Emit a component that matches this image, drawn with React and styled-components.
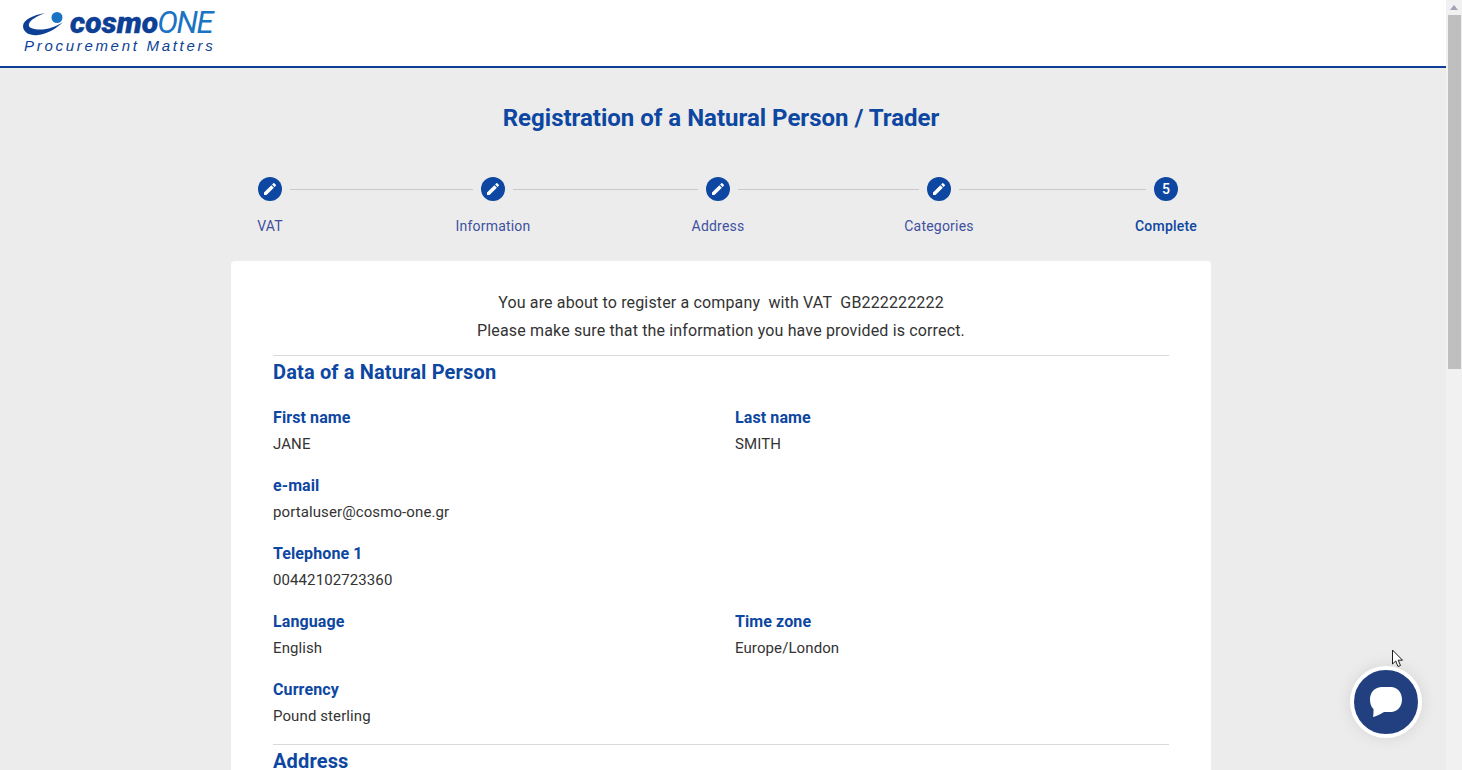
import React from 'react';
import styled, { createGlobalStyle } from 'styled-components';

const GlobalStyle = createGlobalStyle`
  html, body { margin: 0; padding: 0; height: 100%; overflow: hidden; }
  body { font-family: Roboto, "Liberation Sans", sans-serif; background: #ececec; }
`;

const Root = styled.div`
  display: flex;
  height: 770px;
  overflow: hidden;
`;

const Page = styled.div`
  flex: 1;
  min-width: 0;
  overflow: hidden;
  background: #ececec;
`;

const Scrollbar = styled.div`
  flex: 0 0 16px;
  background: #f1f1f1;
  display: flex;
  flex-direction: column;
`;

const ScrollArrow = styled.div`
  height: 15px;
  display: flex;
  align-items: center;
  justify-content: center;
`;

const ScrollThumb = styled.div`
  height: 354px;
  margin: 0 1px 0 2px;
  background: #bfbfbf;
`;

const Header = styled.header`
  height: 66px;
  background: #fff;
  border-bottom: 2px solid #0d3f94;
  padding-left: 23px;
  display: flex;
  align-items: flex-start;
`;

const Logo = styled.div`
  width: 200px;
  padding-top: 9px;
`;

const LogoTop = styled.div`
  display: flex;
  align-items: center;
  height: 28px;
  line-height: 28px;
  margin-bottom: 2px;
  svg { margin-top: 3px; }
`;

const Cosmo = styled.span`
  font-family: Roboto, "Liberation Sans", sans-serif;
  font-weight: 900;
  font-style: italic;
  font-size: 30px;
  letter-spacing: 0.1px;
  -webkit-text-stroke: 0.4px #0d3f94;
  color: #0d3f94;
  margin-left: 6px;
`;

const One = styled.span`
  font-family: Roboto, "Liberation Sans", sans-serif;
  font-weight: 400;
  font-style: italic;
  font-size: 31px;
  letter-spacing: -1.5px;
  color: #1a74c4;
  margin-left: -1px;
`;

const Tagline = styled.div`
  font-family: "Liberation Sans", Arial, sans-serif;
  font-style: italic;
  font-size: 15px;
  letter-spacing: 2.7px;
  line-height: 14px;
  color: #0d3f94;
  margin-left: 1px;
  white-space: nowrap;
`;

const Main = styled.main`
  width: 980px;
  margin-left: 231px;
`;

const Title = styled.h1`
  margin: 0;
  padding-top: 35px;
  text-align: center;
  font-size: 24px;
  line-height: 30px;
  font-weight: 700;
  color: #0d47a1;
`;

const Stepper = styled.div`
  display: flex;
  align-items: flex-start;
  margin-top: 44px;
  padding-left: 27px;
`;

const Step = styled.div`
  flex: 0 0 24px;
  min-width: 0;
  display: flex;
  flex-direction: column;
  align-items: center;
`;

const StepDot = styled.div`
  flex: none;
  width: 24px;
  height: 24px;
  border-radius: 50%;
  background: #0d47a1;
  color: #fff;
  font-size: 14px;
  font-weight: 500;
  display: flex;
  align-items: center;
  justify-content: center;
`;

const StepLabel = styled.div`
  margin-top: 17px;
  font-size: 14px;
  line-height: 16px;
  letter-spacing: 0.2px;
  white-space: nowrap;
  color: ${p => (p.$active ? '#0d47a1' : '#3f51a0')};
  font-weight: ${p => (p.$active ? 500 : 400)};
`;

const StepLine = styled.div`
  flex: 0 0 ${p => p.$width}px;
  height: 1px;
  background: #c9c9c9;
  margin: 12px 8px 0;
`;

const Card = styled.section`
  margin-top: 27px;
  background: #fff;
  border-radius: 4px;
  padding: 28px 42px 40px;
  color: #333;
`;

const Notices = styled.div`
  padding-bottom: 10px;
`;

const Notice = styled.p`
  margin: 0;
  text-align: center;
  font-size: 16px;
  line-height: 28px;
  letter-spacing: 0.15px;
  color: #333;
`;

const SectionTitle = styled.h2`
  margin: 0;
  border-top: 1px solid #d9d9d9;
  padding-top: 3px;
  font-size: 20px;
  line-height: 26px;
  letter-spacing: 0.15px;
  font-weight: 700;
  color: #0d47a1;
`;

const Fields = styled.div`
  display: grid;
  grid-template-columns: 462px 1fr;
  padding: 22px 0 15px;
  row-gap: 18px;
`;

const Field = styled.div`
  grid-column: ${p => (p.$wide ? '1 / -1' : 'auto')};
  height: 50px;
`;

const FieldLabel = styled.div`
  font-size: 16px;
  line-height: 22px;
  letter-spacing: 0.1px;
  font-weight: 700;
  color: #0d47a1;
`;

const FieldValue = styled.div`
  margin-top: 3px;
  font-size: 15px;
  line-height: 24px;
  letter-spacing: 0.1px;
  color: #333;
`;

const ChatButton = styled.button`
  position: fixed;
  left: 1350px;
  top: 666px;
  width: 72px;
  height: 72px;
  box-sizing: border-box;
  border-radius: 50%;
  border: 4px solid #fff;
  background: #223f80;
  box-shadow: 0 0 16px rgba(0, 0, 0, 0.1);
  padding: 0;
  display: flex;
  align-items: center;
  justify-content: center;
`;

const Cursor = styled.svg`
  position: fixed;
  left: 1391px;
  top: 649px;
`;

const Pencil = () => (
  <svg width="16" height="16" viewBox="0 0 24 24" fill="#fff">
    <path d="M3 17.25V21h3.75L17.81 9.94l-3.75-3.75L3 17.25zM20.71 7.04a1 1 0 0 0 0-1.41l-2.34-2.34a1 1 0 0 0-1.41 0l-1.83 1.83 3.75 3.75 1.83-1.83z" />
  </svg>
);

const LogoMark = () => (
  <svg width="41" height="25" viewBox="0 0 41 25">
    <path d="M22 1C10 3 0 8 0 14c0 7 8 10 15 9 9-1 18-6 25-13-8 5-16 8-25 7.500-7-.5-10-2.500-9-5.500C7 8 14 4 22 1z" fill="#0d3f94" />
    <circle cx="34" cy="5.500" r="5.500" fill="#1a74c4" />
  </svg>
);

const ChatIcon = () => (
  <svg width="32" height="30" viewBox="0 0 32 30">
    <path d="M12 0h9c6 0 11 5 11 12.500S27 25 21 25h-7c-3 2-8 4.500-11 5 .5-2 .5-5 .5-8C1 20 0 16 0 12.500 0 5 5 0 12 0z" fill="#fff" />
  </svg>
);

const steps = [
  { label: 'VAT', line: 183 },
  { label: 'Information', line: 185 },
  { label: 'Address', line: 181 },
  { label: 'Categories', line: 187 },
  { label: 'Complete', active: true, number: 5 },
];

const personFields = [
  { label: 'First name', value: 'JANE' },
  { label: 'Last name', value: 'SMITH' },
  { label: 'e-mail', value: 'portaluser@cosmo-one.gr', wide: true },
  { label: 'Telephone 1', value: '00442102723360', wide: true },
  { label: 'Language', value: 'English' },
  { label: 'Time zone', value: 'Europe/London' },
  { label: 'Currency', value: 'Pound sterling', wide: true },
];

export default function App() {
  return (
    <Root>
      <GlobalStyle />
      <Page>
        <Header>
          <Logo>
            <LogoTop>
              <LogoMark />
              <Cosmo>cosmo</Cosmo>
              <One>ONE</One>
            </LogoTop>
            <Tagline>Procurement Matters</Tagline>
          </Logo>
        </Header>
        <Main>
          <Title>Registration of a Natural Person / Trader</Title>
          <Stepper>
            {steps.map(s => (
              <React.Fragment key={s.label}>
                <Step>
                  <StepDot>{s.number || <Pencil />}</StepDot>
                  <StepLabel $active={s.active}>{s.label}</StepLabel>
                </Step>
                {s.line && <StepLine $width={s.line} />}
              </React.Fragment>
            ))}
          </Stepper>
          <Card>
            <Notices>
              <Notice>You are about to register a company&nbsp; with VAT&nbsp; GB222222222</Notice>
              <Notice>Please make sure that the information you have provided is correct.</Notice>
            </Notices>
            <SectionTitle>Data of a Natural Person</SectionTitle>
            <Fields>
              {personFields.map(f => (
                <Field key={f.label} $wide={f.wide}>
                  <FieldLabel>{f.label}</FieldLabel>
                  <FieldValue>{f.value}</FieldValue>
                </Field>
              ))}
            </Fields>
            <SectionTitle>Address</SectionTitle>
          </Card>
        </Main>
      </Page>
      <Scrollbar>
        <ScrollArrow>
          <svg width="8" height="5" viewBox="0 0 8 5">
            <path d="M4 0l4 5H0z" fill="#a3a3b8" />
          </svg>
        </ScrollArrow>
        <ScrollThumb />
      </Scrollbar>
      <ChatButton aria-label="Chat">
        <ChatIcon />
      </ChatButton>
      <Cursor width="14" height="20" viewBox="0 0 14 20">
        <path d="M1.500 1v14l3.200-3 2.300 5.500 2.500-1-2.300-5.300H11.500z" fill="#fff" stroke="#1b1b1b" strokeWidth="1" />
      </Cursor>
    </Root>
  );
}
